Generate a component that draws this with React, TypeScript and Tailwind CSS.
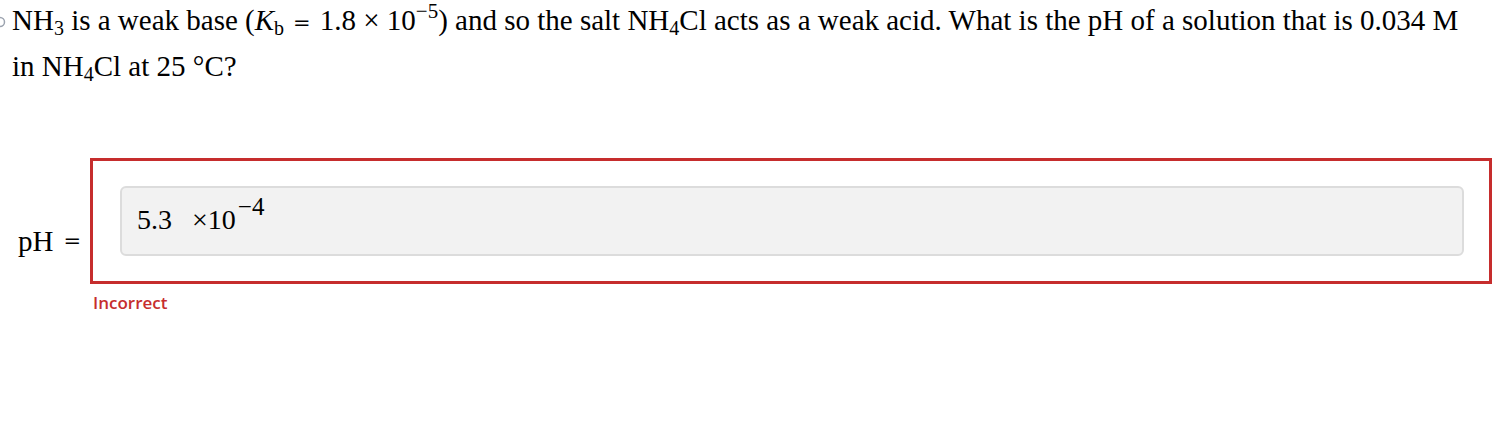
export default function App() {
    return (
        <div className="relative w-[1504px] h-[432px] bg-white text-black font-['Liberation_Serif',serif] text-[29px]">
            <div className="pl-[12px] -mt-[1px] leading-[43px] whitespace-nowrap">
                <span className="inline-block w-[6px] -ml-[12px] mr-[6px] align-[2px] overflow-hidden">
                    <svg width="6" height="12" viewBox="0 0 6 12">
                        <circle cx="0" cy="6" r="4.5" fill="none" stroke="#9ca3af" strokeWidth="1.5" />
                    </svg>
                </span>
                NH<span className="text-[20px] leading-none align-[-5px]">3</span> is a weak base (
                <span className="italic">K</span>
                <span className="text-[20px] leading-none align-[-5px]">b</span>
                <span className="mx-[9px] font-['DejaVu_Serif',serif] text-[21px]">=</span>1.8 × 10
                <span className="text-[21px] leading-none align-[12px]">−5</span>) and so the salt NH
                <span className="text-[20px] leading-none align-[-5px]">4</span>Cl acts as a weak acid. What is the pH of a solution that is 0.034 M
                <br />
                in NH<span className="text-[20px] leading-none align-[-5px]">4</span>Cl at 25 °C?
            </div>

            <div className="mt-[70px] flex items-start">
                <div className="ml-[18px] w-[72px] mt-[62px] leading-[43px] flex">
                    <span>pH</span>
                    <span className="ml-[10px] font-['DejaVu_Serif',serif] text-[21px]">=</span>
                </div>
                <div className="w-[1402px] h-[126px] border-[3px] border-[#c62d2d] pl-[27px] pr-[25px] pt-[25px]">
                    <div className="h-[70px] rounded-[6px] border-2 border-[#dcdcdc] bg-[#f2f2f2] pl-[15px] pt-[14px] text-[28px] leading-[36px] whitespace-nowrap">
                        <span>5.3</span>
                        <span className="ml-[20px]">×10</span>
                        <span className="inline-block align-top -mt-[8px] ml-[2px] text-[25px] leading-none">−4</span>
                    </div>
                </div>
            </div>

            <div className="ml-[93px] mt-[9px] font-['Open_Sans',sans-serif] font-semibold text-[17px] leading-5 text-[#c62d2d]">
                Incorrect
            </div>
        </div>
    );
}
